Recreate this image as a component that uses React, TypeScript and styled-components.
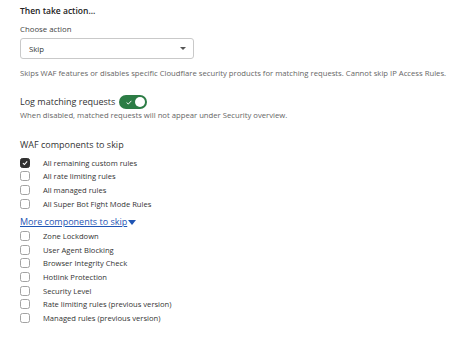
import React from 'react';
import styled, { createGlobalStyle } from 'styled-components';

const GlobalStyle = createGlobalStyle`
  body {
    margin: 0;
    background: #ffffff;
    font-family: 'Open Sans', 'Noto Sans', sans-serif;
    color: #313131;
  }
`

const Page = styled.div`
  width: 474px;
  height: 347px;
  padding: 5px 20px 0;
  box-sizing: border-box;
  display: flex;
  flex-direction: column;
`

const Heading = styled.div`
  font-size: 8.5px;
  font-weight: 600;
  color: #222;
  line-height: 12px;
`

const FieldLabel = styled.div`
  margin-top: 7px;
  font-size: 7.8px;
  line-height: 11px;
  color: #444;
`

const Select = styled.div`
  margin-top: 3px;
  width: 174px;
  height: 21px;
  box-sizing: border-box;
  border: 1px solid #c9c9c9;
  border-radius: 3px;
  display: flex;
  align-items: center;
  justify-content: space-between;
  padding: 0 7px 0 8px;
  font-size: 7.8px;
  color: #333;
`

const Caret = styled.span`
  width: 0;
  height: 0;
  border-left: 3px solid transparent;
  border-right: 3px solid transparent;
  border-top: 3px solid #555;
`

const Hint = styled.div<{ $top: number }>`
  margin-top: ${p => p.$top}px;
  font-size: 7.7px;
  line-height: 11px;
  color: #666;
  white-space: nowrap;
`

const ToggleRow = styled.div`
  margin-top: 16px;
  display: flex;
  align-items: center;
  gap: 4px;
  font-size: 9px;
  line-height: 14px;
  color: #333;
`

const Toggle = styled.span`
  width: 28px;
  height: 14px;
  border-radius: 7px;
  background: #2c7c45;
  position: relative;
  display: inline-flex;
  align-items: center;
  padding-left: 7px;
  box-sizing: border-box;

  &::after {
    content: '';
    position: absolute;
    right: 2px;
    top: 2px;
    width: 10px;
    height: 10px;
    border-radius: 50%;
    background: #fff;
  }
`

const Section = styled.div`
  margin-top: 17px;
  font-size: 9px;
  line-height: 14px;
  color: #333;
`

const List = styled.div<{ $top: number }>`
  margin-top: ${p => p.$top}px;
  display: flex;
  flex-direction: column;
`

const Row = styled.div`
  height: 13.6px;
  display: flex;
  align-items: center;
  font-size: 7.6px;
  color: #333;
`

const Box = styled.span<{ $on?: boolean }>`
  width: 8px;
  height: 8px;
  border-radius: 2.5px;
  border: 1px solid ${p => (p.$on ? '#313131' : '#a3a3a3')};
  background: ${p => (p.$on ? '#313131' : '#fff')};
  margin-right: 13px;
  display: inline-flex;
  align-items: center;
  justify-content: center;
`

const MoreLink = styled.div`
  margin-top: 6px;
  display: flex;
  align-items: center;
  font-size: 9px;
  line-height: 12px;
  color: #1f55b4;
  text-decoration: underline;
  text-underline-offset: 1px;
`

const Arrow = styled.span`
  width: 0;
  height: 0;
  margin-left: 1px;
  border-left: 4px solid transparent;
  border-right: 4px solid transparent;
  border-top: 5px solid #1f55b4;
`

const waf = [
  { label: 'All remaining custom rules', on: true },
  { label: 'All rate limiting rules' },
  { label: 'All managed rules' },
  { label: 'All Super Bot Fight Mode Rules' },
]

const more = [
  'Zone Lockdown',
  'User Agent Blocking',
  'Browser Integrity Check',
  'Hotlink Protection',
  'Security Level',
  'Rate limiting rules (previous version)',
  'Managed rules (previous version)',
]

const Check = () => (
  <svg width="6" height="6" viewBox="0 0 10 10">
    <path d="M1.5 5.2 L4 7.6 L8.6 2.4" fill="none" stroke="#fff" strokeWidth="1.8" />
  </svg>
)

const App: React.FC = () => (
  <>
    <GlobalStyle />
    <Page>
      <Heading>Then take action...</Heading>
      <FieldLabel>Choose action</FieldLabel>
      <Select>
        <span>Skip</span>
        <Caret />
      </Select>
      <Hint $top={9}>
        Skips WAF features or disables specific Cloudflare security products for matching requests. Cannot skip IP Access Rules.
      </Hint>
      <ToggleRow>
        Log matching requests
        <Toggle>
          <svg width="6" height="5" viewBox="0 0 10 8">
            <path d="M1 4 L3.8 6.6 L9 1.2" fill="none" stroke="#fff" strokeWidth="1.6" />
          </svg>
        </Toggle>
      </ToggleRow>
      <Hint $top={1}>When disabled, matched requests will not appear under Security overview.</Hint>
      <Section>WAF components to skip</Section>
      <List $top={4}>
        {waf.map(item => (
          <Row key={item.label}>
            <Box $on={item.on}>{item.on && <Check />}</Box>
            {item.label}
          </Row>
        ))}
      </List>
      <MoreLink>
        More components to skip
        <Arrow />
      </MoreLink>
      <List $top={1}>
        {more.map(label => (
          <Row key={label}>
            <Box />
            {label}
          </Row>
        ))}
      </List>
    </Page>
  </>
)

export default App;
